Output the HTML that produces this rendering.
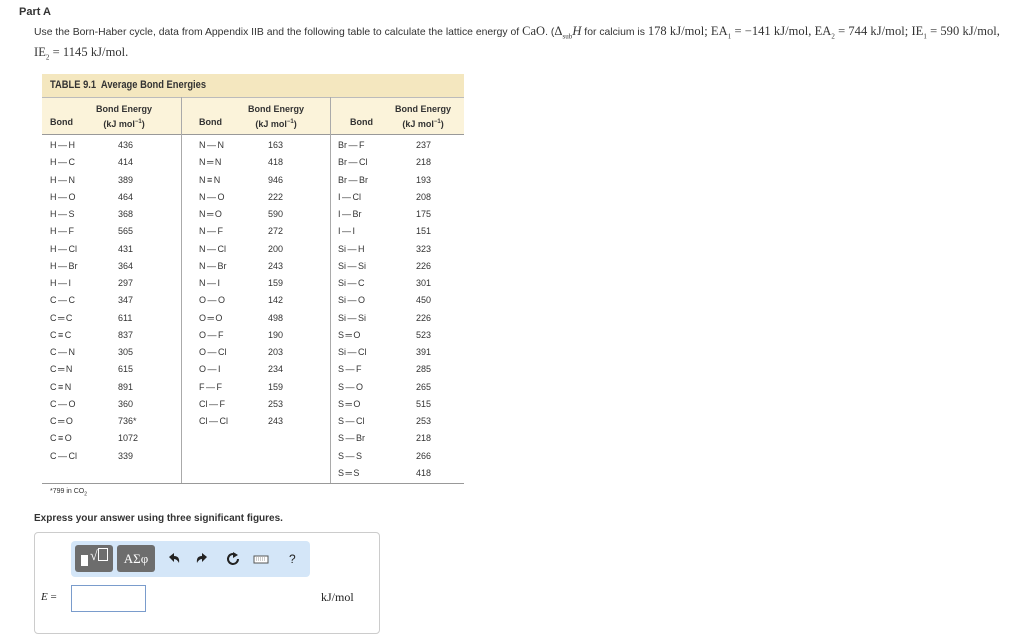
<!DOCTYPE html>
<html><head><meta charset="utf-8"><style>
body{margin:0;width:1024px;height:620px;background:#fff;font-family:"Liberation Sans",sans-serif;color:#222;position:relative;overflow:hidden}
.a{position:absolute;white-space:nowrap}
.col{position:absolute;top:137px;font-size:9px;line-height:17.25px;font-family:"Liberation Sans",sans-serif;color:#333}
.col div{height:17.25px}
.b div{word-spacing:-1px}
.s{font-family:"Liberation Serif",serif;font-size:12.5px;letter-spacing:0.05px}
.btn{position:absolute;top:545px;height:27px;background:#6d6d6d;border-radius:3px;color:#fff}
</style></head><body>
<div class="a" style="left:19px;top:6px;font-size:11px;font-weight:bold;color:#333">Part A</div>
<div class="a" style="left:34px;top:24px;font-size:10.4px;line-height:15px;color:#333">Use the Born-Haber cycle, data from Appendix IIB and the following table to calculate the lattice energy of <span class="s">CaO</span>. (<span class="s">Δ<sub style="font-size:7px">sub</sub><i>H</i></span> for calcium is <span class="s">178 kJ/mol; EA<sub style="font-size:7px">1</sub> = −141 kJ/mol, EA<sub style="font-size:7px">2</sub> = 744 kJ/mol; IE<sub style="font-size:7px">1</sub> = 590 kJ/mol,</span><br><span class="s">IE<sub style="font-size:7px">2</sub> = 1145 kJ/mol.</span></div>

<div class="a" style="left:42px;top:74px;width:422px;height:23px;background:#f4e7bf"></div>
<div class="a" style="left:50px;top:79px;font-size:11px;font-weight:bold;color:#333;transform:scaleX(.85);transform-origin:left">TABLE 9.1&nbsp; Average Bond Energies</div>
<div class="a" style="left:42px;top:97px;width:422px;height:36px;background:#fbf3da;border-top:1px solid #bbb;border-bottom:1px solid #999"></div>
<div class="a" style="left:181px;top:97px;width:1px;height:387px;background:#aaa"></div>
<div class="a" style="left:330px;top:97px;width:1px;height:387px;background:#aaa"></div>
<div class="a" style="left:42px;top:483px;width:422px;height:1px;background:#999"></div>
<div class="a" style="font-size:9px;font-weight:bold;color:#333;left:50px;top:117px">Bond</div>
<div class="a" style="font-size:9px;font-weight:bold;color:#333;left:96px;top:103px;text-align:center;line-height:13px">Bond Energy<br>(kJ mol<sup style="font-size:6px">−1</sup>)</div>
<div class="a" style="font-size:9px;font-weight:bold;color:#333;left:199px;top:117px">Bond</div>
<div class="a" style="font-size:9px;font-weight:bold;color:#333;left:248px;top:103px;text-align:center;line-height:13px">Bond Energy<br>(kJ mol<sup style="font-size:6px">−1</sup>)</div>
<div class="a" style="font-size:9px;font-weight:bold;color:#333;left:350px;top:117px">Bond</div>
<div class="a" style="font-size:9px;font-weight:bold;color:#333;left:395px;top:103px;text-align:center;line-height:13px">Bond Energy<br>(kJ mol<sup style="font-size:6px">−1</sup>)</div>

<div class="col b" style="left:50px"><div>H — H</div><div>H — C</div><div>H — N</div><div>H — O</div><div>H — S</div><div>H — F</div><div>H — Cl</div><div>H — Br</div><div>H — I</div><div>C — C</div><div>C ═ C</div><div>C ≡ C</div><div>C — N</div><div>C ═ N</div><div>C ≡ N</div><div>C — O</div><div>C ═ O</div><div>C ≡ O</div><div>C — Cl</div></div>
<div class="col" style="left:118px"><div>436</div><div>414</div><div>389</div><div>464</div><div>368</div><div>565</div><div>431</div><div>364</div><div>297</div><div>347</div><div>611</div><div>837</div><div>305</div><div>615</div><div>891</div><div>360</div><div>736*</div><div>1072</div><div>339</div></div>
<div class="col b" style="left:199px"><div>N — N</div><div>N ═ N</div><div>N ≡ N</div><div>N — O</div><div>N ═ O</div><div>N — F</div><div>N — Cl</div><div>N — Br</div><div>N — I</div><div>O — O</div><div>O ═ O</div><div>O — F</div><div>O — Cl</div><div>O — I</div><div>F — F</div><div>Cl — F</div><div>Cl — Cl</div></div>
<div class="col" style="left:268px"><div>163</div><div>418</div><div>946</div><div>222</div><div>590</div><div>272</div><div>200</div><div>243</div><div>159</div><div>142</div><div>498</div><div>190</div><div>203</div><div>234</div><div>159</div><div>253</div><div>243</div></div>
<div class="col b" style="left:338px"><div>Br — F</div><div>Br — Cl</div><div>Br — Br</div><div>I — Cl</div><div>I — Br</div><div>I — I</div><div>Si — H</div><div>Si — Si</div><div>Si — C</div><div>Si — O</div><div>Si — Si</div><div>S ═ O</div><div>Si — Cl</div><div>S — F</div><div>S — O</div><div>S ═ O</div><div>S — Cl</div><div>S — Br</div><div>S — S</div><div>S ═ S</div></div>
<div class="col" style="left:416px"><div>237</div><div>218</div><div>193</div><div>208</div><div>175</div><div>151</div><div>323</div><div>226</div><div>301</div><div>450</div><div>226</div><div>523</div><div>391</div><div>285</div><div>265</div><div>515</div><div>253</div><div>218</div><div>266</div><div>418</div></div>

<div class="a" style="left:50px;top:488px;font-size:7px;color:#333">*799 in CO<sub style="font-size:5px">2</sub></div>
<div class="a" style="left:34px;top:513px;font-size:10px;font-weight:bold;color:#333">Express your answer using three significant figures.</div>

<div class="a" style="left:34px;top:532px;width:344px;height:100px;border:1px solid #ccc;border-radius:4px"></div>
<div class="a" style="left:71px;top:541px;width:239px;height:36px;background:#d4e6f8;border-radius:4px"></div>
<div class="btn" style="left:75px;width:38px"><div class="a" style="left:6px;top:10px;width:7px;height:11px;background:#fff"></div><div class="a" style="left:15px;top:3px;font-size:14px;font-family:'Liberation Serif',serif">√<span style="display:inline-block;width:8px;height:11px;border:1px solid #fff;vertical-align:-1px"></span></div></div>
<div class="btn" style="left:117px;width:38px;font-family:'Liberation Serif',serif;font-size:13px;line-height:27px;text-align:center">ΑΣφ</div>
<svg class="a" style="left:165px;top:549px" width="140" height="20" viewBox="0 0 140 20">
<path d="M4 8 L9 4 L9 7 Q15 7 14 14 Q12 10 9 10 L9 13 Z" fill="#222"/>
<path d="M42 8 L37 4 L37 7 Q31 7 32 14 Q34 10 37 10 L37 13 Z" fill="#222"/>
<path d="M71 6 A5 5 0 1 0 73 10" fill="none" stroke="#222" stroke-width="2"/><path d="M68 3 L73 6 L68 9 Z" fill="#222"/>
<rect x="89" y="7" width="14" height="7" fill="#fff" stroke="#555"/><path d="M91 9h10M91 11h10" stroke="#777" stroke-width=".8" stroke-dasharray="1 1"/>
<text x="124" y="14" font-family="Liberation Sans" font-size="12" fill="#222">?</text>
</svg>
<div class="a" style="left:41px;top:591px;font-size:11px;font-family:'Liberation Serif',serif"><i>E</i> =</div>
<div class="a" style="left:71px;top:585px;width:73px;height:25px;border:1px solid #7a9ccc"></div>
<div class="a" style="left:321px;top:590px;font-size:12px;font-family:'Liberation Serif',serif">kJ/mol</div>
</body></html>
